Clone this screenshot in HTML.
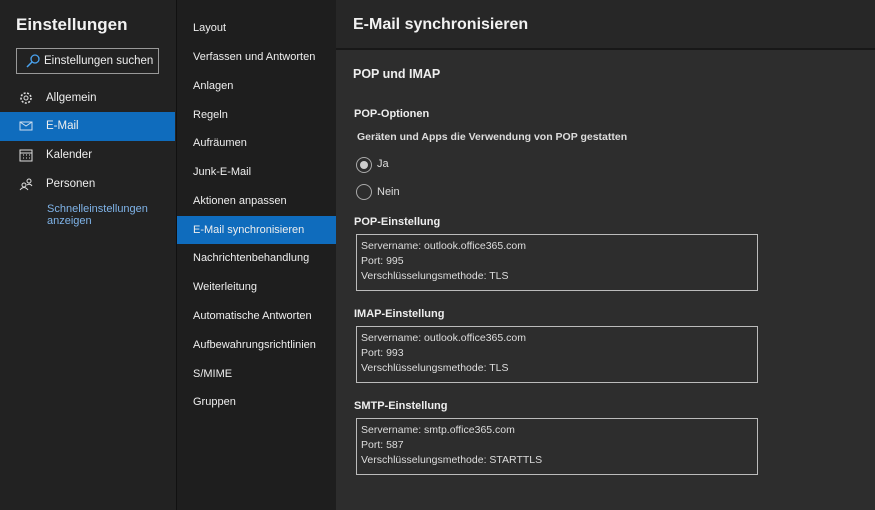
<!DOCTYPE html>
<html><head><meta charset="utf-8"><style>
*{margin:0;padding:0;box-sizing:border-box}
body{width:875px;height:510px;overflow:hidden;background:#2d2d2d;font-family:"Liberation Sans",sans-serif;color:#f0f0f0;position:relative}
.left{position:absolute;left:0;top:0;width:176px;height:510px;background:#222}
.mid{position:absolute;left:176px;top:0;width:160px;height:510px;background:#1e1e1e;border-left:1px solid #111}
.right{position:absolute;left:336px;top:0;width:539px;height:510px;background:#2d2d2d}
.hdr{height:50px;background:#272727;border-bottom:2px solid #181818}
h1{position:absolute;left:16px;top:15px;font-size:17px;font-weight:bold;color:#f2f2f2}
.search{position:absolute;left:16px;top:48px;width:143px;height:26px;border:1px solid #999;font-size:11.5px;padding:6px 0 0 27px;color:#eee;white-space:nowrap}
.search svg{position:absolute;left:9px;top:5px}
.nav{position:absolute;left:0;width:175px;height:29px;font-size:11.5px;padding:8px 0 0 46px;color:#eee;white-space:nowrap}
.nav svg{position:absolute;left:19px;top:7px}
.sel{background:#0f6cbd}
.link{position:absolute;left:47px;top:203px;font-size:11px;line-height:12px;color:#7fb3e8}
.mi{position:absolute;left:0;width:159px;height:29px;font-size:11px;padding:8px 0 0 16px;color:#eee;white-space:nowrap}
.t{position:absolute;font-size:12px;color:#eee;white-space:nowrap}
.b{font-weight:bold}
.box{position:absolute;left:356px;width:402px;height:57px;border:1px solid #bbb;font-size:10.5px;line-height:15px;padding:4px 0 0 4px;color:#ddd}
.radio{position:absolute;left:356px;width:16px;height:16px;border:1px solid #aaa;border-radius:50%}
.radio.on::after{content:"";position:absolute;left:3px;top:3px;width:8px;height:8px;border-radius:50%;background:#ccc}
</style></head><body>
<div class="left">
<h1>Einstellungen</h1>
<div class="search"><svg width="14" height="14" viewBox="0 0 14 14"><circle cx="9" cy="5" r="4" fill="none" stroke="#4aa3f0" stroke-width="1.3"/><line x1="6" y1="8" x2="1" y2="13" stroke="#4aa3f0" stroke-width="1.5"/></svg>Einstellungen suchen</div>
<div class="nav" style="top:84px"><svg width="14" height="14" viewBox="0 0 14 14"><circle cx="7" cy="7" r="5" fill="none" stroke="#ddd" stroke-width="1.6" stroke-dasharray="2 1.5"/><circle cx="7" cy="7" r="2" fill="none" stroke="#ddd"/></svg>Allgemein</div>
<div class="nav sel" style="top:112px"><svg width="14" height="14" viewBox="0 0 14 14"><rect x="1" y="3" width="12" height="8" fill="none" stroke="#cde" /><path d="M1 3l6 4 6-4" fill="none" stroke="#cde"/></svg>E-Mail</div>
<div class="nav" style="top:141px"><svg width="14" height="14" viewBox="0 0 14 14"><rect x="1" y="2" width="12" height="11" fill="none" stroke="#ddd"/><path d="M1 5h12M4 7h1M7 7h1M10 7h1M4 10h1M7 10h1M10 10h1" stroke="#ddd"/></svg>Kalender</div>
<div class="nav" style="top:170px"><svg width="14" height="14" viewBox="0 0 14 14"><circle cx="5" cy="8" r="2" fill="none" stroke="#ddd"/><circle cx="10" cy="4" r="2" fill="none" stroke="#ddd"/><path d="M1 13q4-5 8 0M8 8q3-2 5 1" fill="none" stroke="#ddd"/></svg>Personen</div>
<div class="link">Schnelleinstellungen<br>anzeigen</div>
</div>
<div class="mid">
<div class="mi" style="top:14px">Layout</div>
<div class="mi" style="top:43px">Verfassen und Antworten</div>
<div class="mi" style="top:72px">Anlagen</div>
<div class="mi" style="top:101px">Regeln</div>
<div class="mi" style="top:129px">Aufräumen</div>
<div class="mi" style="top:158px">Junk-E-Mail</div>
<div class="mi" style="top:187px">Aktionen anpassen</div>
<div class="mi sel" style="top:216px;height:28px">E-Mail synchronisieren</div>
<div class="mi" style="top:244px">Nachrichtenbehandlung</div>
<div class="mi" style="top:273px">Weiterleitung</div>
<div class="mi" style="top:302px">Automatische Antworten</div>
<div class="mi" style="top:331px">Aufbewahrungsrichtlinien</div>
<div class="mi" style="top:360px">S/MIME</div>
<div class="mi" style="top:388px">Gruppen</div>
</div>
<div class="right"><div class="hdr"></div></div>
<div class="t b" style="left:353px;top:16px;font-size:16px;color:#f2f2f2">E-Mail synchronisieren</div>
<div class="t b" style="left:353px;top:67px;font-size:12.5px">POP und IMAP</div>
<div class="t b" style="left:354px;top:108px;font-size:11px">POP-Optionen</div>
<div class="t b" style="left:357px;top:131px;font-size:10.5px;color:#ddd">Geräten und Apps die Verwendung von POP gestatten</div>
<div class="radio on" style="top:157px"></div><div class="t" style="left:377px;top:158px;font-size:11px;color:#ddd">Ja</div>
<div class="radio" style="top:184px"></div><div class="t" style="left:377px;top:186px;font-size:11px;color:#ddd">Nein</div>
<div class="t b" style="left:354px;top:216px;font-size:11px">POP-Einstellung</div>
<div class="box" style="top:234px">Servername: outlook.office365.com<br>Port: 995<br>Verschlüsselungsmethode: TLS</div>
<div class="t b" style="left:354px;top:308px;font-size:11px">IMAP-Einstellung</div>
<div class="box" style="top:326px">Servername: outlook.office365.com<br>Port: 993<br>Verschlüsselungsmethode: TLS</div>
<div class="t b" style="left:354px;top:400px;font-size:11px">SMTP-Einstellung</div>
<div class="box" style="top:418px">Servername: smtp.office365.com<br>Port: 587<br>Verschlüsselungsmethode: STARTTLS</div>
</body></html>
